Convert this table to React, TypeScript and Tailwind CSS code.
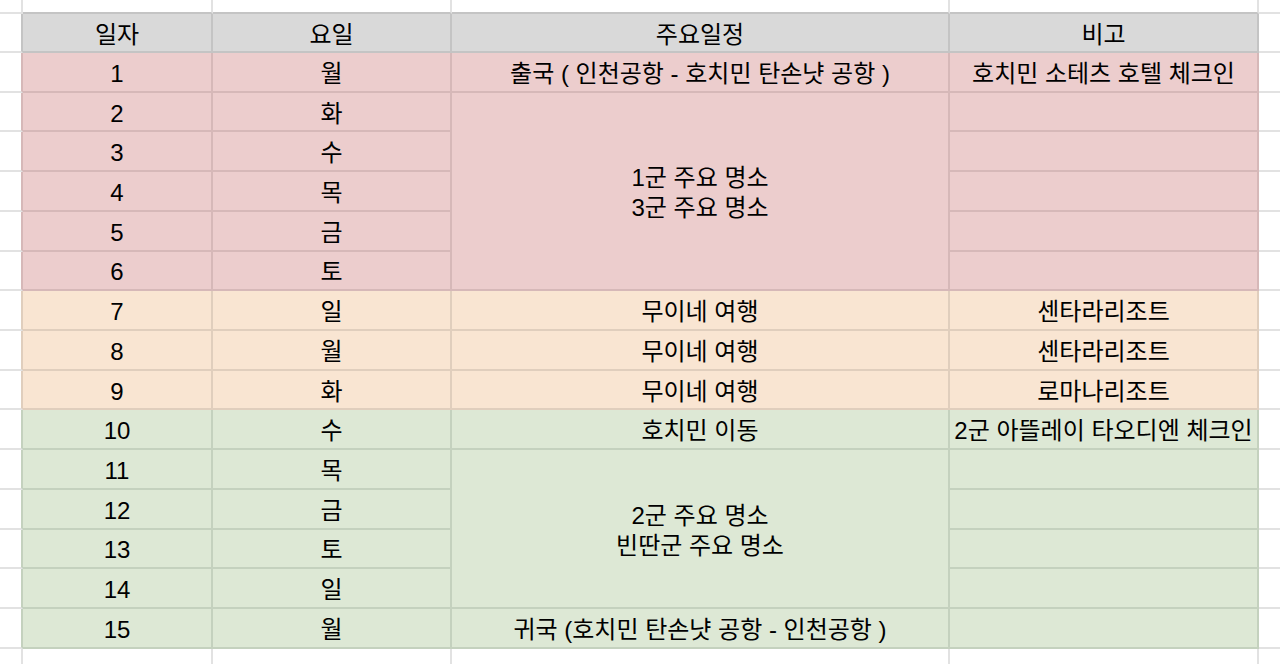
type Tone = "pink" | "orange" | "green";

type Row = {
  day: number;
  weekday: string;
  plan?: string[];
  planSpan?: number;
  note: string;
  tone: Tone;
};

const rows: Row[] = [
  { day: 1, weekday: "월", plan: ["출국 ( 인천공항 - 호치민 탄손냣 공항 )"], note: "호치민 소테츠 호텔 체크인", tone: "pink" },
  { day: 2, weekday: "화", plan: ["1군 주요 명소", "3군 주요 명소"], planSpan: 5, note: "", tone: "pink" },
  { day: 3, weekday: "수", note: "", tone: "pink" },
  { day: 4, weekday: "목", note: "", tone: "pink" },
  { day: 5, weekday: "금", note: "", tone: "pink" },
  { day: 6, weekday: "토", note: "", tone: "pink" },
  { day: 7, weekday: "일", plan: ["무이네 여행"], note: "센타라리조트", tone: "orange" },
  { day: 8, weekday: "월", plan: ["무이네 여행"], note: "센타라리조트", tone: "orange" },
  { day: 9, weekday: "화", plan: ["무이네 여행"], note: "로마나리조트", tone: "orange" },
  { day: 10, weekday: "수", plan: ["호치민 이동"], note: "2군 아뜰레이 타오디엔 체크인", tone: "green" },
  { day: 11, weekday: "목", plan: ["2군 주요 명소", "빈딴군 주요 명소"], planSpan: 4, note: "", tone: "green" },
  { day: 12, weekday: "금", note: "", tone: "green" },
  { day: 13, weekday: "토", note: "", tone: "green" },
  { day: 14, weekday: "일", note: "", tone: "green" },
  { day: 15, weekday: "월", plan: ["귀국 (호치민 탄손냣 공항 - 인천공항 )"], note: "", tone: "green" },
];

const toneCell: Record<Tone, string> = {
  pink: "bg-[#eccdcd] border-[#d6b8b8]",
  orange: "bg-[#f9e5d2] border-[#e0cebd]",
  green: "bg-[#dde8d5] border-[#c4d1be]",
};

const toneEdge: Record<Tone, string> = {
  pink: "border-r-[#d6b8b8]",
  orange: "border-r-[#e0cebd]",
  green: "border-r-[#c4d1be]",
};

const cell = "flex items-center justify-center pt-[4px] border-r-2 border-b-2";
const blank = "bg-white border-b-2 border-[#e2e2e2]";

export default function App() {
  return (
    <div
      className="grid h-[664px] w-[1280px] overflow-hidden bg-white text-[24px] leading-[30px] text-black"
      style={{
        fontFamily: '"Liberation Sans", "Noto Sans CJK KR", sans-serif',
        gridTemplateColumns: "23px 190px 239px 498px 309px 1fr",
        gridTemplateRows: "14px 39px repeat(15, 39.73px) 1fr",
      }}
    >
      {/* top strip */}
      <div className="border-r-2 border-b-2 border-[#e2e2e2] bg-white" />
      <div className="border-r-2 border-b-2 border-r-[#e2e2e2] border-b-[#c4c4c4] bg-white" />
      <div className="border-r-2 border-b-2 border-r-[#e2e2e2] border-b-[#c4c4c4] bg-white" />
      <div className="border-r-2 border-b-2 border-r-[#e2e2e2] border-b-[#c4c4c4] bg-white" />
      <div className="border-r-2 border-b-2 border-r-[#e2e2e2] border-b-[#c4c4c4] bg-white" />
      <div className="border-b-2 border-[#e2e2e2] bg-white" />

      {/* header */}
      <div className="border-r-2 border-b-2 border-r-[#c4c4c4] border-b-[#e2e2e2] bg-white" />
      {["일자", "요일", "주요일정", "비고"].map((h) => (
        <div key={h} className={`${cell} border-[#c4c4c4] bg-[#d9d9d9]`}>
          {h}
        </div>
      ))}
      <div className={blank} />

      {rows.map((r) => (
        <div key={r.day} className="contents">
          <div className={`border-r-2 border-b-2 bg-white border-b-[#e2e2e2] ${toneEdge[r.tone]}`} />
          <div className={`${cell} ${toneCell[r.tone]}`}>{r.day}</div>
          <div className={`${cell} ${toneCell[r.tone]}`}>{r.weekday}</div>
          {r.plan ? (
            <div
              className={`${cell} col-start-4 flex-col ${toneCell[r.tone]} ${
                r.planSpan === 5 ? "row-span-5" : r.planSpan === 4 ? "row-span-4" : ""
              }`}
            >
              {r.plan.map((line) => (
                <span key={line} className="whitespace-nowrap">
                  {line}
                </span>
              ))}
            </div>
          ) : null}
          <div className={`${cell} col-start-5 whitespace-nowrap ${toneCell[r.tone]}`}>{r.note}</div>
          <div className={blank} />
        </div>
      ))}

      {/* bottom strip */}
      <div className="border-r-2 border-[#e2e2e2] bg-white" />
      <div className="border-r-2 border-[#e2e2e2] bg-white" />
      <div className="border-r-2 border-[#e2e2e2] bg-white" />
      <div className="border-r-2 border-[#e2e2e2] bg-white" />
      <div className="border-r-2 border-[#e2e2e2] bg-white" />
      <div className="bg-white" />
    </div>
  );
}
